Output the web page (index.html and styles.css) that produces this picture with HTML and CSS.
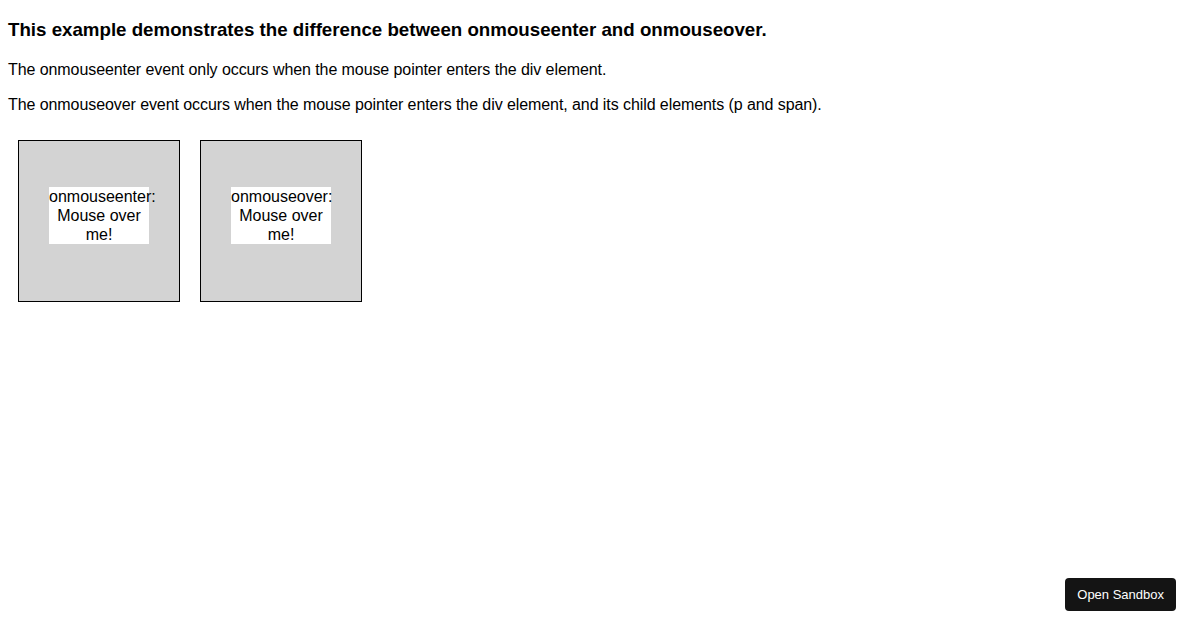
FILE: index.html
```html
<!DOCTYPE html>
<html>
<head>
<meta charset="UTF-8">
<title>onmouseenter vs onmouseover</title>
<link rel="stylesheet" href="styles.css">
</head>
<body>

<h3>This example demonstrates the difference between onmouseenter and onmouseover.</h3>

<p>The onmouseenter event only occurs when the mouse pointer enters the div element.</p>
<p>The onmouseover event occurs when the mouse pointer enters the div element, and its child elements (p and span).</p>

<div class="box" onmouseenter="countEnter()">
  <p class="label">onmouseenter: <br>Mouse over me!</p>
</div>

<div class="box" onmouseover="countOver()">
  <p class="label">onmouseover: <br>Mouse over me!</p>
</div>

<button class="sandbox">Open Sandbox</button>

<script>
var x = 0;
var y = 0;
function countEnter() {
  x += 1;
}
function countOver() {
  y += 1;
}
</script>

</body>
</html>
```

FILE: styles.css
```css
html, body {
  margin: 0;
  padding: 0;
}

body {
  padding: 0 8px;
  font-family: "Liberation Sans", Arial, Helvetica, sans-serif;
  font-size: 16px;
  line-height: 19px;
  color: #000;
  background: #fff;
}

h3 {
  font-size: 18.72px;
  line-height: 22px;
  font-weight: bold;
  margin: 19px 0;
}

p {
  margin: 16px 0;
  letter-spacing: -0.08px;
}

.box {
  width: 100px;
  height: 100px;
  border: 1px solid black;
  margin: 10px;
  float: left;
  padding: 30px;
  text-align: center;
  background-color: lightgray;
}

.label {
  background-color: white;
  letter-spacing: 0;
}

.sandbox {
  position: fixed;
  right: 24px;
  bottom: 19px;
  height: 33px;
  padding: 0 12px;
  background: #141414;
  color: #fff;
  border: none;
  border-radius: 4px;
  font-family: "Liberation Sans", Arial, sans-serif;
  font-size: 13px;
}
```
